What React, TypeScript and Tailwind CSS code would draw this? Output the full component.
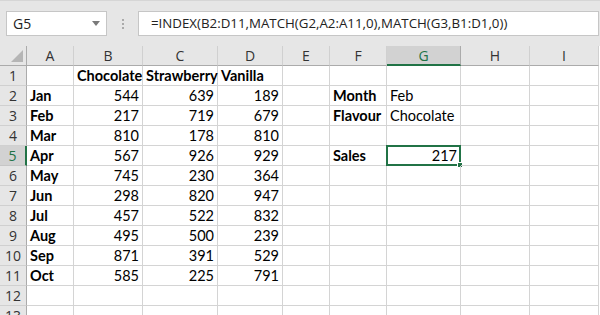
const cols = [
  { name: "", w: 27 },
  { name: "A", w: 47 },
  { name: "B", w: 69 },
  { name: "C", w: 75 },
  { name: "D", w: 65 },
  { name: "E", w: 47 },
  { name: "F", w: 57 },
  { name: "G", w: 74 },
  { name: "H", w: 69 },
  { name: "I", w: 69 },
];

type Cell = { v: string; bold?: boolean; num?: boolean };

const data: Record<number, Record<string, Cell>> = {
  1: {
    B: { v: "Chocolate", bold: true },
    C: { v: "Strawberry", bold: true },
    D: { v: "Vanilla", bold: true },
  },
  2: { F: { v: "Month", bold: true }, G: { v: "Feb" } },
  3: { F: { v: "Flavour", bold: true }, G: { v: "Chocolate" } },
  5: { F: { v: "Sales", bold: true }, G: { v: "217", num: true } },
};

const table: [string, number, number, number][] = [
  ["Jan", 544, 639, 189],
  ["Feb", 217, 719, 679],
  ["Mar", 810, 178, 810],
  ["Apr", 567, 926, 929],
  ["May", 745, 230, 364],
  ["Jun", 298, 820, 947],
  ["Jul", 457, 522, 832],
  ["Aug", 495, 500, 239],
  ["Sep", 871, 391, 529],
  ["Oct", 585, 225, 791],
];

table.forEach(([m, b, c, d], i) => {
  const r = i + 2;
  data[r] = {
    ...(data[r] || {}),
    A: { v: m, bold: true },
    B: { v: String(b), num: true },
    C: { v: String(c), num: true },
    D: { v: String(d), num: true },
  };
});

const rows = Array.from({ length: 13 }, (_, i) => i + 1);

export default function App() {
  return (
    <div className="w-[600px] h-[315px] overflow-hidden bg-white">
      {/* Name box + formula bar */}
      <div className="h-[46px] bg-[#e6e6e6] flex items-start pt-[10px] border-t border-[#d6d6d6]">
        <div className="ml-[6px] w-[101px] h-[25px] bg-white border border-[#c6c6c6] flex items-center justify-between pl-[6px] pr-[6px]">
          <span className="text-[14px] text-[#222] font-['Open_Sans',sans-serif]">G5</span>
          <svg width="8" height="5" viewBox="0 0 8 5">
            <path d="M0 0 L8 0 L4 5 Z" fill="#7a7a7a" />
          </svg>
        </div>
        <div className="w-[31px] h-[25px] flex flex-col items-center justify-center gap-[2px]">
          <div className="w-[2px] h-[2px] bg-[#aaa]" />
          <div className="w-[2px] h-[2px] bg-[#aaa]" />
          <div className="w-[2px] h-[2px] bg-[#aaa]" />
        </div>
        <div className="flex-1 h-[25px] bg-white border border-[#c6c6c6] mr-[1px] flex items-center pl-[12px]">
          <span className="text-[13.3px] text-[#222] font-['Open_Sans',sans-serif]">
            =INDEX(B2:D11,MATCH(G2,A2:A11,0),MATCH(G3,B1:D1,0))
          </span>
        </div>
      </div>

      {/* Column headers */}
      <div className="flex h-[20px]">
        {cols.map((c, i) =>
          i === 0 ? (
            <div
              key={i}
              className="relative bg-[#e6e6e6] border-r border-b border-[#ababab] shrink-0"
              style={{ width: c.w }}
            >
              <svg className="absolute right-[3px] bottom-[3px]" width="12" height="12" viewBox="0 0 12 12">
                <path d="M12 0 L12 12 L0 12 Z" fill="#b5b5b5" />
              </svg>
            </div>
          ) : (
            <div
              key={i}
              className={
                c.name === "G"
                  ? "shrink-0 bg-[#d2d2d2] border-r border-[#ababab] border-b-2 border-b-[#217346] flex items-center justify-center text-[14px] text-[#217346] font-['Open_Sans',sans-serif]"
                  : "shrink-0 bg-[#e6e6e6] border-r border-b border-r-[#d0d0d0] border-b-[#ababab] flex items-center justify-center text-[14px] text-[#333] font-['Open_Sans',sans-serif]"
              }
              style={{ width: c.w }}
            >
              {c.name}
            </div>
          )
        )}
      </div>

      {/* Grid rows */}
      {rows.map((r) => (
        <div key={r} className="flex h-[20px]">
          {cols.map((c, i) => {
            if (i === 0) {
              return (
                <div
                  key={i}
                  className={
                    r === 5
                      ? "shrink-0 bg-[#d2d2d2] border-b border-b-[#c6c6c6] border-r-2 border-r-[#217346] flex items-center justify-center text-[14px] text-[#217346] font-['Open_Sans',sans-serif]"
                      : "shrink-0 bg-[#e6e6e6] border-b border-b-[#d0d0d0] border-r border-r-[#ababab] flex items-center justify-center text-[14px] text-[#333] font-['Open_Sans',sans-serif]"
                  }
                  style={{ width: c.w }}
                >
                  {r}
                </div>
              );
            }
            const cell = data[r]?.[c.name];
            const active = r === 5 && c.name === "G";
            return (
              <div
                key={i}
                className={`relative shrink-0 border-r border-b border-[#d4d4d4] flex items-end pb-[1px] leading-[17px] px-[3px] text-[14.5px] text-black font-['Lato',sans-serif] whitespace-nowrap ${
                  cell?.num ? "justify-end" : "justify-start"
                } ${cell?.bold ? "font-bold" : "font-normal"}`}
                style={{ width: c.w }}
              >
                {cell?.v}
                {active && (
                  <>
                    <div className="absolute -left-[1px] -top-[1px] -right-[1px] -bottom-[1px] border-2 border-[#217346]" />
                    <div className="absolute -right-[3px] -bottom-[3px] w-[6px] h-[6px] bg-[#217346] border border-white" />
                  </>
                )}
              </div>
            );
          })}
        </div>
      ))}
    </div>
  );
}
